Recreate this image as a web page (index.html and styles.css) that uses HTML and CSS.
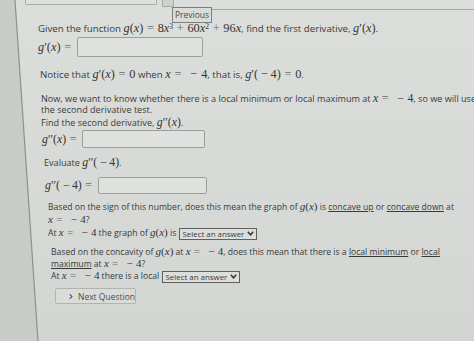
FILE: index.html
```html
<!DOCTYPE html>
<html>
<head>
<meta charset="utf-8">
<link rel="stylesheet" href="styles.css">
</head>
<body>
<div class="page">
  <svg class="edge" width="474" height="341" viewBox="0 0 474 341">
    <polygon points="0,0 15,0 38,341 0,341" fill="#c9cbc9"/>
    <line x1="15" y1="0" x2="38" y2="341" stroke="#8e908e" stroke-width="1.2"/>
  </svg>
  <div class="topbar">
    <div class="tab"></div>
    <div class="tabsmall"></div>
    <div class="rule"></div>
  </div>
  <div class="prev">Previous</div>

  <div class="content">
    <div class="sec s1">
      <p class="line l1">Given the function <span class="m"><i>g</i>(<i>x</i>)<span class="op">=</span>8<i>x</i><sup>3</sup><span class="op">+</span>60<i>x</i><sup>2</sup><span class="op">+</span>96<i>x</i></span>, find the first derivative, <span class="m"><i>g</i>′(<i>x</i>)</span>.</p>
      <div class="row r1"><span class="m"><i>g</i>′(<i>x</i>)<span class="op">=</span></span><span class="box b1"></span></div>
      <p class="line l2">Notice that <span class="m"><i>g</i>′(<i>x</i>)<span class="op">=</span>0</span> when <span class="m"><i>x</i><span class="op">=</span><span class="neg">−</span>4</span>, that is, <span class="m"><i>g</i>′(<span class="neg2">−</span>4)<span class="op">=</span>0</span>.</p>
    </div>

    <div class="sec s2">
      <div class="para p3">
        <p class="line">Now, we want to know whether there is a local minimum or local maximum at <span class="m"><i>x</i><span class="op">=</span><span class="neg">−</span>4</span>, so we will use</p>
        <p class="line">the second derivative test.</p>
        <p class="line">Find the second derivative, <span class="m"><i>g</i>′′(<i>x</i>)</span>.</p>
      </div>
      <div class="row r2"><span class="m"><i>g</i>′′(<i>x</i>)<span class="op">=</span></span><span class="box b2"></span></div>
      <p class="line l4">Evaluate <span class="m"><i>g</i>′′(<span class="neg2">−</span>4)</span>.</p>
      <div class="row r3"><span class="m"><i>g</i>′′(<span class="neg2">−</span>4)<span class="op">=</span></span><span class="box b3"></span></div>
    </div>

    <div class="sec s3">
      <div class="para p5">
        <p class="line">Based on the sign of this number, does this mean the graph of <span class="m"><i>g</i>(<i>x</i>)</span> is <span class="u">concave up</span> or <span class="u">concave down</span> at</p>
        <p class="line"><span class="m"><i>x</i><span class="op">=</span><span class="neg">−</span>4</span>?</p>
        <p class="line">At <span class="m"><i>x</i><span class="op">=</span><span class="neg">−</span>4</span> the graph of <span class="m"><i>g</i>(<i>x</i>)</span> is <span class="sel">Select an answer <svg width="7" height="5" viewBox="0 0 7 5"><path d="M0.8 0.8 L3.5 3.8 L6.2 0.8" fill="none" stroke="#333" stroke-width="1.5"/></svg></span></p>
      </div>

      <div class="para p6">
        <p class="line">Based on the concavity of <span class="m"><i>g</i>(<i>x</i>)</span> at <span class="m"><i>x</i><span class="op">=</span><span class="neg">−</span>4</span>, does this mean that there is a <span class="u">local minimum</span> or <span class="u">local</span></p>
        <p class="line"><span class="u">maximum</span> at <span class="m"><i>x</i><span class="op">=</span><span class="neg">−</span>4</span>?</p>
        <p class="line">At <span class="m"><i>x</i><span class="op">=</span><span class="neg">−</span>4</span> there is a local <span class="sel">Select an answer <svg width="7" height="5" viewBox="0 0 7 5"><path d="M0.8 0.8 L3.5 3.8 L6.2 0.8" fill="none" stroke="#333" stroke-width="1.5"/></svg></span></p>
      </div>

      <div class="btnrow"><span class="next"><svg width="5" height="7" viewBox="0 0 5 7"><path d="M1 0.8 L3.8 3.5 L1 6.2" fill="none" stroke="#444" stroke-width="1.3"/></svg> Next Question</span></div>
    </div>
  </div>
</div>
</body>
</html>
```

FILE: styles.css
```css
html, body {
  margin: 0;
  padding: 0;
}
body {
  background: #d7d9d7;
  width: 474px;
  height: 341px;
  overflow: hidden;
}
.page {
  position: relative;
  width: 474px;
  height: 341px;
  overflow: hidden;
  font-family: "Open Sans", "Liberation Sans", sans-serif;
  color: #393b39;
  background: linear-gradient(180deg, #dcdedc 0%, #d7d9d7 60%, #d3d5d3 100%);
}
.edge {
  position: absolute;
  left: 0;
  top: 0;
}
.topbar {
  display: flex;
  align-items: flex-start;
  height: 11px;
  position: relative;
}
.tab {
  margin-left: 25px;
  width: 130px;
  height: 4px;
  border: 1px solid #a9aba9;
  border-top: none;
  border-radius: 0 0 2px 2px;
  background: #dfe1df;
}
.tabsmall {
  margin-left: 5px;
  width: 10px;
  height: 6px;
  border: 1px solid #a9aba9;
  border-top: none;
  background: #cfd1cf;
}
.rule {
  flex: 1;
  height: 9px;
  border-bottom: 1px solid #a6a8a6;
}
.prev {
  position: absolute;
  left: 172px;
  top: 7px;
  width: 38px;
  height: 14px;
  border: 1px solid #7d7f7d;
  background: #dadcda;
  font-size: 8.5px;
  line-height: 14px;
  text-align: center;
  color: #4a4c4a;
}
.content {
  position: relative;
  padding-left: 38px;
  padding-top: 11px;
  white-space: nowrap;
}
.s1 {
  font-size: 9.7px;
}
.s1 .m {
  font-size: 12.3px;
}
.s2 {
  font-size: 9.1px;
}
.s2 .m {
  font-size: 11.8px;
}
.s3 {
  font-size: 8.6px;
}
.s3 .m {
  font-size: 11px;
}
.line {
  margin: 0;
  height: 12px;
  line-height: 12px;
}
.m {
  font-family: "Liberation Serif", "DejaVu Serif", serif;
  color: #333533;
}
.m i {
  font-style: italic;
}
.m sup {
  font-size: 0.62em;
  line-height: 0;
  vertical-align: 0.4em;
}
.op {
  display: inline-block;
  padding: 0 0.3em;
  color: #6a6c6a;
}
.neg {
  padding: 0 0.3em 0 0.45em;
}
.neg2 {
  padding: 0 0.2em 0 0.25em;
}
.row {
  display: flex;
  align-items: center;
  gap: 2px;
}
.box {
  display: block;
  border: 1px solid #9c9e9c;
  border-radius: 2px;
  background: #dfe1df;
}
.r1 {
  margin-top: 3px;
  height: 20px;
}
.b1 {
  width: 124px;
  height: 18px;
}
.l2 {
  margin-top: 11px;
  margin-left: 2px;
}
.p3 {
  margin-top: 12px;
  margin-left: 3px;
}
.r2 {
  margin-top: 2px;
  margin-left: 4px;
  height: 18px;
}
.b2 {
  width: 121px;
  height: 16px;
}
.l4 {
  margin-top: 8px;
  margin-left: 6px;
}
.r3 {
  margin-top: 9px;
  margin-left: 7px;
  height: 17px;
}
.b3 {
  width: 107px;
  height: 15px;
}
.p5 {
  margin-top: 6px;
  margin-left: 10px;
}
.p5 .line {
  height: 13px;
  line-height: 13px;
}
.p6 {
  margin-top: 6px;
  margin-left: 13px;
}
.p6 .line {
  height: 12px;
  line-height: 12px;
}
.u {
  text-decoration: underline;
  text-underline-offset: 1px;
}
.sel {
  display: inline-flex;
  align-items: center;
  gap: 3px;
  height: 10px;
  line-height: 10px;
  padding: 0 2px 0 3px;
  border: 1px solid #5f615f;
  background: #dcdedc;
  font-size: 7.9px;
  vertical-align: middle;
}
.btnrow {
  margin-top: 7px;
  margin-left: 17px;
}
.next {
  display: inline-flex;
  align-items: center;
  gap: 5px;
  width: 66px;
  height: 14px;
  padding-left: 13px;
  border: 1px solid #b2b4b2;
  border-radius: 2px;
  background: #dadcda;
  font-size: 8.5px;
  color: #4a4c4a;
}
```
